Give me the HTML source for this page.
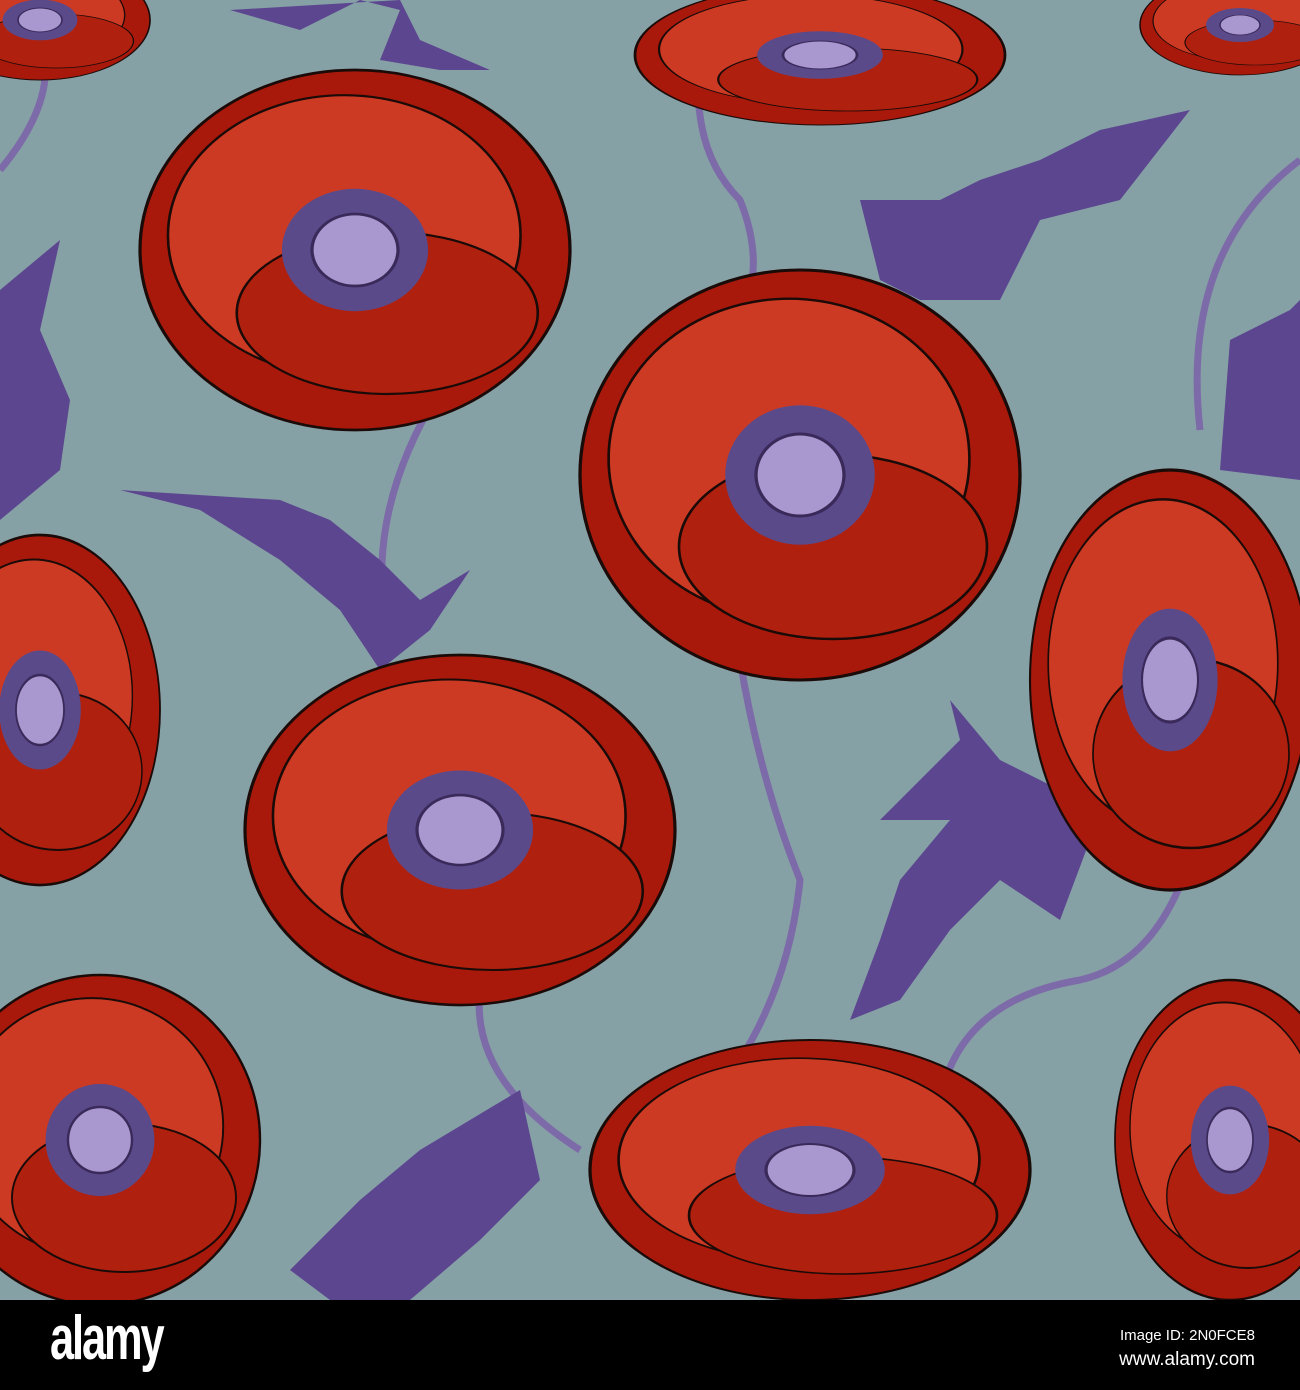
<!DOCTYPE html>
<html><head><meta charset="utf-8"><style>
html,body{margin:0;padding:0;width:1300px;height:1390px;overflow:hidden;background:#000}
svg{display:block}
.bar{position:absolute;left:0;top:1300px;width:1300px;height:90px;background:#000}
.logo{position:absolute;left:50px;top:8px;color:#fff;font:bold 62px/1 "Liberation Sans Narrow","Liberation Sans",sans-serif;letter-spacing:-3px;transform:scaleX(0.7);transform-origin:left}
.r1{position:absolute;right:45px;top:27px;color:#fff;font:15px "Liberation Sans Narrow","Liberation Sans",sans-serif}
.r2{position:absolute;right:45px;top:49px;color:#fff;font:19px "Liberation Sans Narrow","Liberation Sans",sans-serif}
</style></head><body>
<svg width="1300" height="1300" viewBox="0 0 1300 1300">
<rect width="1300" height="1300" fill="#86a1a5"/>
<defs>
<g id="pop">
<ellipse cx="0" cy="0" rx="1" ry="1" fill="#a8190c" stroke="#1a0a08" stroke-width="0.015"/>
<ellipse cx="-0.05" cy="-0.08" rx="0.82" ry="0.78" fill="#cd3a24" stroke="#1a0a08" stroke-width="0.012"/>
<ellipse cx="0.15" cy="0.35" rx="0.7" ry="0.45" fill="#b0200f" stroke="#1a0a08" stroke-width="0.012"/>
<circle cx="0" cy="0" r="0.34" fill="#5b4a8a"/>
<circle cx="0" cy="0" r="0.2" fill="#a998d0" stroke="#3a2a5a" stroke-width="0.015"/>
</g>
</defs>
<g stroke="#7d6aa8" stroke-width="7" fill="none">
<path d="M0 170 Q50 110 45 60"/>
<path d="M440 390 Q360 520 390 640"/>
<path d="M700 60 Q690 150 740 200 Q760 250 750 290"/>
<path d="M740 660 Q760 780 800 880 Q790 980 740 1060"/>
<path d="M480 990 Q470 1080 580 1150"/>
<path d="M1300 160 Q1180 250 1200 430"/>
<path d="M1200 820 Q1170 960 1080 980 Q960 1000 940 1100"/>
</g>
<g fill="#5c4690">
<path d="M230 10 L300 30 L360 0 L400 10 L380 60 L440 70 L490 70 L420 40 L400 0Z"/>
<path d="M860 200 L880 280 L920 300 L1000 300 L1040 220 L1120 200 L1190 110 L1100 130 L1040 160 L980 180 L940 200Z"/>
<path d="M120 490 L200 510 L280 560 L340 610 L380 670 L430 630 L470 570 L420 600 L380 560 L330 520 L280 500Z"/>
<path d="M0 290 L60 240 L40 330 L70 400 L60 470 L0 520Z"/>
<path d="M1230 340 L1290 310 L1300 300 L1300 480 L1220 470Z"/>
<path d="M950 700 L1000 760 L1060 790 L1100 760 L1090 840 L1060 920 L1000 880 L950 930 L900 1000 L850 1020 L880 940 L900 880 L950 820 L880 820 L960 740Z"/>
<path d="M290 1270 L360 1200 L420 1150 L470 1120 L520 1090 L540 1180 L480 1240 L410 1300 L330 1300Z"/>
</g>
<use href="#pop" transform="translate(40,20) scale(110,60)"/>
<use href="#pop" transform="translate(1240,25) scale(100,50)"/>
<use href="#pop" transform="translate(820,55) scale(185,70)"/>
<use href="#pop" transform="translate(355,250) scale(215,180)"/>
<use href="#pop" transform="translate(800,475) scale(220,205)"/>
<use href="#pop" transform="translate(1170,680) scale(140,210)"/>
<use href="#pop" transform="translate(40,710) scale(120,175)"/>
<use href="#pop" transform="translate(460,830) scale(215,175)"/>
<use href="#pop" transform="translate(100,1140) scale(160,165)"/>
<use href="#pop" transform="translate(810,1170) scale(220,130)"/>
<use href="#pop" transform="translate(1230,1140) scale(115,160)"/>
</svg>
<div class="bar">
<div class="logo">alamy</div>
<div class="r1">Image ID: 2N0FCE8</div>
<div class="r2">www.alamy.com</div>
</div>
</body></html>
